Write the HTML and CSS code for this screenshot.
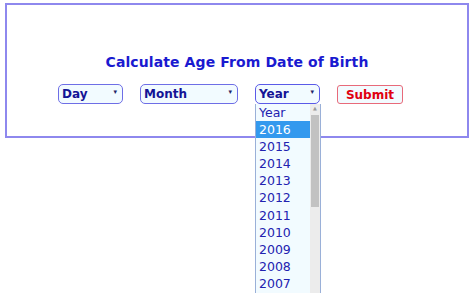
FILE: index.html
```html
<!DOCTYPE html>
<html>
<head>
<meta charset="utf-8">
<link rel="stylesheet" href="styles.css">
</head>
<body>
<div class="box">
  <h1 class="title">Calculate Age From Date of Birth</h1>
  <div class="row">
    <div class="sel sel-day"><span>Day</span><span class="arr">&#9662;</span></div>
    <div class="sel sel-month"><span>Month</span><span class="arr">&#9662;</span></div>
    <div class="sel-wrap">
      <div class="sel sel-year"><span>Year</span><span class="arr">&#9662;</span></div>
      <div class="list">
        <div class="items">
          <div class="item">Year</div>
          <div class="item active">2016</div>
          <div class="item">2015</div>
          <div class="item">2014</div>
          <div class="item">2013</div>
          <div class="item">2012</div>
          <div class="item">2011</div>
          <div class="item">2010</div>
          <div class="item">2009</div>
          <div class="item">2008</div>
          <div class="item">2007</div>
        </div>
        <div class="scroll"><div class="up">&#9650;</div><div class="thumb"></div></div>
      </div>
    </div>
    <button class="submit">Submit</button>
  </div>
</div>
</body>
</html>
```
FILE: styles.css
```css
html, body { margin: 0; padding: 0; background: #fff; }
body { font-family: "Comic Sans MS", "DejaVu Sans", sans-serif; width: 474px; height: 293px; overflow: hidden; }
.box {
  margin: 3px 5px 0 5px;
  height: 131px;
  border: 2px solid #8e88ee;
  display: flex;
  flex-direction: column;
  align-items: center;
}
.title {
  margin: 48px 0 0 0;
  font-size: 14px;
  font-weight: bold;
  color: #1a1ad0;
  line-height: 18px;
  letter-spacing: 0.1px;
}
.row {
  display: flex;
  align-items: flex-start;
  margin-top: 13px;
  margin-left: -13px;
}
.sel {
  box-sizing: border-box;
  height: 20px;
  border: 1px solid #6e6ee6;
  border-radius: 5px;
  background: #f2fbff;
  color: #141496;
  font-weight: bold;
  font-size: 12px;
  display: flex;
  align-items: center;
  justify-content: space-between;
  padding: 0 5px 0 3px;
}
.arr { font-size: 7px; color: #222266; margin-top: -4px; }
.sel-day { width: 65px; margin-right: 17px; }
.sel-month { width: 98px; margin-right: 17px; }
.sel-wrap { position: relative; width: 65px; margin-right: 17px; }
.sel-year { width: 65px; border-color: #5a5ae8; }
.list {
  position: absolute;
  left: 0;
  top: 20px;
  width: 66px;
  height: 200px;
  box-sizing: border-box;
  border-left: 1px solid #9ab0d8;
  border-right: 1px solid #9ab0d8;
  background: #f2fbff;
  display: flex;
}
.items { flex: 1; }
.item {
  height: 17.1px;
  line-height: 17px;
  font-size: 12.5px;
  color: #2222b0;
  padding-left: 3px;
}
.item.active { background: #3399ee; color: #fff; }
.scroll { width: 10px; background: #ececec; position: relative; }
.up { font-size: 5px; color: #999; text-align: center; height: 9px; line-height: 9px; }
.thumb { margin: 2px 1px 0 1px; height: 92px; background: #c2c2c2; }
.submit {
  box-sizing: border-box;
  width: 66px;
  height: 19px;
  margin-top: 1px;
  border: 1px solid #e86a7a;
  border-radius: 3px;
  background: #f2fbff;
  color: #e00010;
  font-family: inherit;
  font-weight: bold;
  font-size: 12px;
  padding: 0;
}
```
